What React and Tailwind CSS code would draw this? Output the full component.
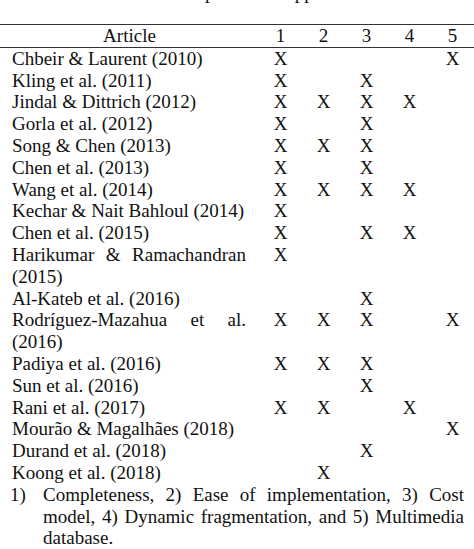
import React from 'react';

const rows = [
  { a: 'Chbeir & Laurent (2010)', m: [1, 0, 0, 0, 1] },
  { a: 'Kling et al. (2011)', m: [1, 0, 1, 0, 0] },
  { a: 'Jindal & Dittrich (2012)', m: [1, 1, 1, 1, 0] },
  { a: 'Gorla et al. (2012)', m: [1, 0, 1, 0, 0] },
  { a: 'Song & Chen (2013)', m: [1, 1, 1, 0, 0] },
  { a: 'Chen et al. (2013)', m: [1, 0, 1, 0, 0] },
  { a: 'Wang et al. (2014)', m: [1, 1, 1, 1, 0] },
  { a: 'Kechar & Nait Bahloul (2014)', m: [1, 0, 0, 0, 0] },
  { a: 'Chen et al. (2015)', m: [1, 0, 1, 1, 0] },
  { a: 'Harikumar & Ramachandran (2015)', m: [1, 0, 0, 0, 0] },
  { a: 'Al-Kateb et al. (2016)', m: [0, 0, 1, 0, 0] },
  { a: 'Rodríguez-Mazahua et al. (2016)', m: [1, 1, 1, 0, 1] },
  { a: 'Padiya et al. (2016)', m: [1, 1, 1, 0, 0] },
  { a: 'Sun et al. (2016)', m: [0, 0, 1, 0, 0] },
  { a: 'Rani et al. (2017)', m: [1, 1, 0, 1, 0] },
  { a: 'Mourão & Magalhães (2018)', m: [0, 0, 0, 0, 1] },
  { a: 'Durand et al. (2018)', m: [0, 0, 1, 0, 0] },
  { a: 'Koong et al. (2018)', m: [0, 1, 0, 0, 0] },
];

export default function App() {
  return (
    <div className="w-[474px] h-[549px] overflow-hidden bg-white text-[#111] text-[19px] leading-[21.8px] [font-family:Liberation_Serif,serif]">
      <div className="h-[24px] overflow-hidden text-center">
        <div className="-mt-[18px]">Table 2. Comparison of approaches</div>
      </div>

      <div className="grid grid-cols-[259px_repeat(5,43px)] border-t border-b border-[#333] text-center">
        <div className="pl-[12px] pr-[12px]">Article</div>
        <div>1</div>
        <div>2</div>
        <div>3</div>
        <div>4</div>
        <div>5</div>
      </div>

      <div className="grid grid-cols-[259px_repeat(5,43px)]">
        {rows.map((r) => (
          <React.Fragment key={r.a}>
            <div className="pl-[12px] pr-[13px] text-justify">{r.a}</div>
            {r.m.map((v, i) => (
              <div key={i} className="text-center">{v ? 'X' : ''}</div>
            ))}
          </React.Fragment>
        ))}
      </div>

      <div className="grid grid-cols-[33px_1fr] pl-[10px] pr-[10px]">
        <div>1)</div>
        <div className="text-justify">
          Completeness, 2) Ease of implementation, 3) Cost model, 4) Dynamic fragmentation, and 5) Multimedia database.
        </div>
      </div>
    </div>
  );
}
